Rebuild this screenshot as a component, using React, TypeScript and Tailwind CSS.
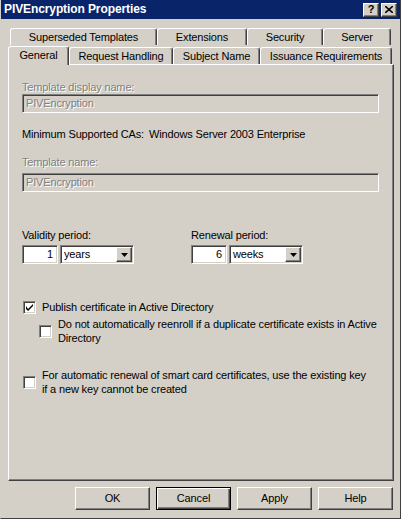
import React from 'react';

const raised =
  'border border-t-white border-l-white border-r-[#404040] border-b-[#404040] shadow-[inset_-1px_-1px_0_#808080]';
const sunken =
  'border border-t-[#808080] border-l-[#808080] border-r-white border-b-white shadow-[inset_1px_1px_0_#404040,inset_-1px_-1px_0_#d4d0c8]';
const disabledText = 'text-[#808080] [text-shadow:1px_1px_0_#ffffff]';

const DropArrow: React.FC = () => (
  <div className={`w-[16px] h-[15px] bg-[#d4d0c8] flex items-center justify-center ${raised}`}>
    <svg width="7" height="4" viewBox="0 0 7 4">
      <path d="M0 0h7L3.5 4z" fill="#000" />
    </svg>
  </div>
);

const Checkbox: React.FC<{ checked?: boolean }> = ({ checked }) => (
  <div className={`w-[13px] h-[13px] bg-white shrink-0 flex items-center justify-center ${sunken}`}>
    {checked && (
      <svg width="7" height="7" viewBox="0 0 7 7">
        <path d="M0 2v3l2 2 5-5V-0L2 5z" fill="#000" />
      </svg>
    )}
  </div>
);

const Period: React.FC<{ value: string; unit: string }> = ({ value, unit }) => (
  <div className="flex gap-[2px] h-[19px]">
    <div className={`w-[36px] bg-white flex items-center justify-end pr-[4px] ${sunken}`}>{value}</div>
    <div className={`w-[74px] bg-white flex items-center justify-between pl-[3px] pr-[1px] ${sunken}`}>
      <span>{unit}</span>
      <DropArrow />
    </div>
  </div>
);

const Tab: React.FC<{ label: string; w: string; selected?: boolean }> = ({ label, w, selected }) => (
  <div
    className={`${w} flex items-center justify-center bg-[#d4d0c8] border-l border-t border-r border-l-white border-t-white border-r-[#404040] rounded-t-[3px] shadow-[inset_-1px_0_0_#808080] ${
      selected ? 'h-[19px] relative z-10 -mb-[1px] pb-[2px]' : 'h-[17px] self-end'
    }`}
  >
    {label}
  </div>
);

const Button: React.FC<{ label: string; focused?: boolean }> = ({ label, focused }) => (
  <div
    className={`w-[75px] h-[23px] flex items-center justify-center bg-[#d4d0c8] ${
      focused
        ? 'border border-black shadow-[inset_1px_1px_0_#fff,inset_-1px_-1px_0_#404040,inset_-2px_-2px_0_#808080]'
        : raised
    }`}
  >
    {label}
  </div>
);

const App: React.FC = () => {
  return (
    <div className="w-[401px] h-[519px] bg-[#d4d0c8] font-['Liberation_Sans',Arial,sans-serif] text-[11px] leading-[13px] tracking-[-0.15px] text-black border-r border-b border-r-[#404040] border-b-[#404040] border-l border-l-[#d4d0c8] overflow-hidden flex flex-col">
      <div className="h-[19px] bg-[#0a246a] flex items-center justify-between pl-[3px] pr-[3px]">
        <span className="text-white font-bold text-[12px] tracking-[-0.1px]">PIVEncryption Properties</span>
        <div className="flex gap-[2px]">
          <div className={`w-[16px] h-[14px] bg-[#d4d0c8] flex items-center justify-center font-bold text-[11px] ${raised}`}>?</div>
          <div className={`w-[16px] h-[14px] bg-[#d4d0c8] flex items-center justify-center ${raised}`}>
            <svg width="8" height="7" viewBox="0 0 8 7">
              <path d="M0 0l8 7M8 0L0 7" stroke="#000" strokeWidth="1.6" />
            </svg>
          </div>
        </div>
      </div>

      <div className="px-[7px] pt-[9px] flex flex-col">
        <div className="flex pl-[2px] h-[17px]">
          <Tab label="Superseded Templates" w="w-[147px]" />
          <Tab label="Extensions" w="w-[90px]" />
          <Tab label="Security" w="w-[76px]" />
          <Tab label="Server" w="w-[68px]" />
        </div>
        <div className="flex h-[19px] items-end">
          <Tab label="General" w="w-[61px]" selected />
          <Tab label="Request Handling" w="w-[104px]" />
          <Tab label="Subject Name" w="w-[87px]" />
          <Tab label="Issuance Requirements" w="w-[132px]" />
        </div>

        <div className="w-[386px] h-[417px] border border-t-white border-l-white border-r-[#404040] border-b-[#404040] shadow-[inset_-1px_-1px_0_#808080] pl-[13px] pr-[14px] flex flex-col">
          <div className={`mt-[16px] ${disabledText}`}>Template display name:</div>
          <div className={`h-[19px] flex items-center pl-[3px] ${sunken} ${disabledText}`}>PIVEncryption</div>

          <div className="mt-[15px] flex">
            <span className="w-[127px] shrink-0">Minimum Supported CAs:</span>
            <span>Windows Server 2003 Enterprise</span>
          </div>

          <div className={`mt-[15px] ${disabledText}`}>Template name:</div>
          <div className={`mt-[4px] h-[19px] flex items-center pl-[3px] ${sunken} ${disabledText}`}>PIVEncryption</div>

          <div className="mt-[37px] flex">
            <div className="w-[169px] flex flex-col gap-[3px]">
              <span>Validity period:</span>
              <Period value="1" unit="years" />
            </div>
            <div className="flex flex-col gap-[3px]">
              <span>Renewal period:</span>
              <Period value="6" unit="weeks" />
            </div>
          </div>

          <div className="mt-[37px] flex items-center gap-[6px] pl-[1px]">
            <Checkbox checked />
            <span>Publish certificate in Active Directory</span>
          </div>

          <div className="mt-[3px] flex items-center gap-[6px] pl-[17px] leading-[14px]">
            <Checkbox />
            <span>
              Do not automatically reenroll if a duplicate certificate exists in Active
              <br />
              Directory
            </span>
          </div>

          <div className="mt-[23px] flex items-center gap-[6px] pl-[1px] leading-[14px]">
            <Checkbox />
            <span>
              For automatic renewal of smart card certificates, use the existing key
              <br />
              if a new key cannot be created
            </span>
          </div>
        </div>

        <div className="mt-[6px] flex justify-end gap-[6px]">
          <Button label="OK" />
          <Button label="Cancel" focused />
          <Button label="Apply" />
          <Button label="Help" />
        </div>
      </div>
    </div>
  );
};

export default App;
